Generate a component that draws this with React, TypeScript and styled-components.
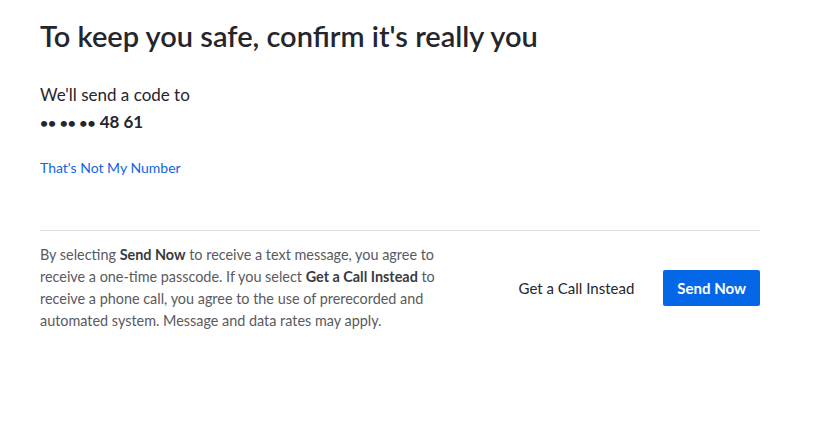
import styled, { createGlobalStyle } from "styled-components";

const GlobalStyle = createGlobalStyle`
  html, body {
    margin: 0;
    padding: 0;
    background: #ffffff;
  }
  body {
    font-family: Lato, "Noto Sans", "Liberation Sans", sans-serif;
    color: #25252d;
  }
`;

const Page = styled.main`
  width: 720px;
  padding: 18px 40px 40px;
`;

const Title = styled.h1`
  margin: 0;
  font-size: 29px;
  line-height: 36px;
  font-weight: 600;
  color: #25252d;
`;

const Intro = styled.p`
  margin: 28px 0 0;
  font-size: 17px;
  line-height: 26px;
  color: #25252d;
`;

const Masked = styled.p`
  margin: 1px 0 0;
  font-size: 17px;
  line-height: 26px;
  font-weight: 700;
  color: #25252d;
`;

const Dots = styled.span`
  font-size: 14px;
  line-height: 1;
`;

const Link = styled.a`
  display: inline-block;
  margin-top: 23px;
  font-size: 14px;
  line-height: 20px;
  color: #1264e3;
  text-decoration: none;
  cursor: pointer;
`;

const Divider = styled.hr`
  margin: 52px 0 0;
  border: 0;
  border-top: 1px solid #dcdcdc;
`;

const Footer = styled.div`
  display: flex;
  align-items: center;
  justify-content: space-between;
  padding-top: 13px;
`;

const Legal = styled.p`
  margin: 0;
  width: 420px;
  font-size: 14.4px;
  line-height: 22px;
  color: #5a5a60;

  strong {
    font-weight: 700;
    color: #3a3a40;
  }
`;

const Actions = styled.div`
  display: flex;
  align-items: center;
  gap: 29px;
`;

const Button = styled.button<{ primary?: boolean }>`
  font-family: inherit;
  font-size: 15px;
  font-weight: ${(p) => (p.primary ? 700 : 400)};
  height: 36px;
  padding: ${(p) => (p.primary ? "0 14px" : "0")};
  border: 0;
  border-radius: 2px;
  cursor: pointer;
  background: ${(p) => (p.primary ? "#0467e8" : "transparent")};
  color: ${(p) => (p.primary ? "#ffffff" : "#25252d")};
`;

export default function App() {
  return (
    <>
      <GlobalStyle />
      <Page>
        <Title>To keep you safe, confirm it's really you</Title>
        <Intro>We'll send a code to</Intro>
        <Masked>
          <Dots>•• •• ••</Dots> 48 61
        </Masked>
        <Link>That's Not My Number</Link>
        <Divider />
        <Footer>
          <Legal>
            By selecting <strong>Send Now</strong> to receive a text message, you agree to
            receive a one-time passcode. If you select <strong>Get a Call Instead</strong> to
            receive a phone call, you agree to the use of prerecorded and automated system.
            Message and data rates may apply.
          </Legal>
          <Actions>
            <Button>Get a Call Instead</Button>
            <Button primary>Send Now</Button>
          </Actions>
        </Footer>
      </Page>
    </>
  );
}
